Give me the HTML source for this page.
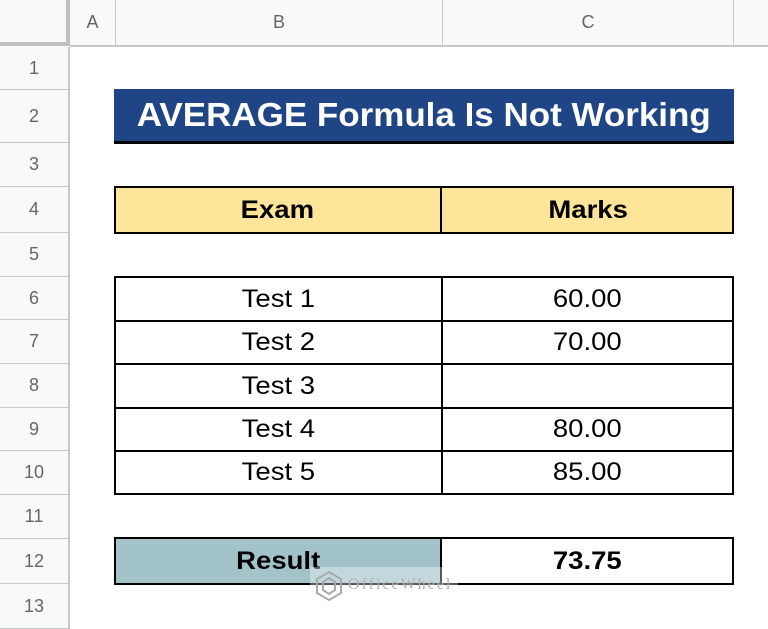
<!DOCTYPE html>
<html><head><style>
*{margin:0;padding:0;box-sizing:border-box}
body{width:768px;height:625px;overflow:hidden;background:#fff;font-family:"Liberation Sans",Arial,sans-serif;position:relative}
.a{position:absolute}
.ch{background:#f8f9fa;border-right:1px solid #c7c7c7;border-bottom:2px solid #c7c7c7;top:0;height:47px;color:#666;font-size:18px;display:flex;align-items:center;justify-content:center}
.rh{background:#f8f9fa;border-bottom:1px solid #c7c7c7;border-right:2px solid #c7c7c7;left:0;width:70px;color:#666;font-size:18px;display:flex;align-items:center;justify-content:center}
.c{display:flex;align-items:center;justify-content:center;font-size:25px;color:#000}
.c span{display:inline-block;transform:scaleX(1.1)}
</style></head><body>
<div class="a ch" style="left:0;width:70px;border-right:4px solid #c0c0c0;border-bottom:4px solid #c0c0c0;height:46px"></div>
<div class="a ch" style="left:70px;width:46px">A</div>
<div class="a ch" style="left:116px;width:327px">B</div>
<div class="a ch" style="left:443px;width:291px">C</div>
<div class="a ch" style="left:734px;width:40px"></div>
<div class="a rh" style="top:47px;height:43px">1</div>
<div class="a rh" style="top:90px;height:53px">2</div>
<div class="a rh" style="top:143px;height:44px">3</div>
<div class="a rh" style="top:187px;height:46px">4</div>
<div class="a rh" style="top:233px;height:44px">5</div>
<div class="a rh" style="top:277px;height:43px">6</div>
<div class="a rh" style="top:320px;height:44px">7</div>
<div class="a rh" style="top:364px;height:44px">8</div>
<div class="a rh" style="top:408px;height:43px">9</div>
<div class="a rh" style="top:451px;height:44px">10</div>
<div class="a rh" style="top:495px;height:44px">11</div>
<div class="a rh" style="top:539px;height:45px">12</div>
<div class="a rh" style="top:584px;height:45px">13</div>

<div class="a c" style="left:114px;top:89px;width:620px;height:55px;background:#1f4586;border-bottom:3px solid #000;color:#fff;font-weight:bold;font-size:33px"><span style="transform:scaleX(1.06)">AVERAGE Formula Is Not Working</span></div>

<div class="a" style="left:114px;top:186px;width:620px;height:48px;background:#ffe599;border:2px solid #000"></div>
<div class="a c" style="left:114px;top:186px;width:328px;height:48px;border-right:2px solid #000;font-weight:bold"><span>Exam</span></div>
<div class="a c" style="left:442px;top:186px;width:292px;height:48px;font-weight:bold"><span>Marks</span></div>

<div class="a" style="left:114px;top:276px;width:620px;height:219px;border:2px solid #000"></div>
<div class="a" style="left:441px;top:276px;width:2px;height:219px;background:#000"></div>
<div class="a" style="left:114px;top:320px;width:620px;height:2px;background:#000"></div>
<div class="a" style="left:114px;top:363px;width:620px;height:2px;background:#000"></div>
<div class="a" style="left:114px;top:407px;width:620px;height:2px;background:#000"></div>
<div class="a" style="left:114px;top:450px;width:620px;height:2px;background:#000"></div>
<div class="a c" style="left:116px;top:278px;width:325px;height:42px"><span>Test 1</span></div>
<div class="a c" style="left:443px;top:278px;width:289px;height:42px"><span>60.00</span></div>
<div class="a c" style="left:116px;top:322px;width:325px;height:41px"><span>Test 2</span></div>
<div class="a c" style="left:443px;top:322px;width:289px;height:41px"><span>70.00</span></div>
<div class="a c" style="left:116px;top:365px;width:325px;height:42px"><span>Test 3</span></div>
<div class="a c" style="left:116px;top:409px;width:325px;height:41px"><span>Test 4</span></div>
<div class="a c" style="left:443px;top:409px;width:289px;height:41px"><span>80.00</span></div>
<div class="a c" style="left:116px;top:452px;width:325px;height:41px"><span>Test 5</span></div>
<div class="a c" style="left:443px;top:452px;width:289px;height:41px"><span>85.00</span></div>

<div class="a" style="left:114px;top:537px;width:620px;height:48px;border:2px solid #000"></div>
<div class="a c" style="left:116px;top:539px;width:326px;height:44px;background:#a2c4c9;border-right:2px solid #000;font-weight:bold"><span>Result</span></div>
<div class="a c" style="left:443px;top:539px;width:289px;height:44px;font-weight:bold"><span>73.75</span></div>

<div class="a" style="left:310px;top:567px;width:148px;height:34px;background:rgba(255,255,255,0.35)"></div>
<svg class="a" style="left:314px;top:570px" width="30" height="32" viewBox="0 0 30 32"><path d="M15 2 L27 9 L27 23 L15 30 L3 23 L3 9 Z M15 8 L21 12 L21 20 L15 24 L9 20 L9 12 Z" fill="none" stroke="#aaa" stroke-width="2"/></svg>
<div class="a" style="left:348px;top:576px;font-family:'Liberation Serif',serif;font-size:16px;letter-spacing:2px;color:#b0b0b0">OfficeWheel</div>
</body></html>
